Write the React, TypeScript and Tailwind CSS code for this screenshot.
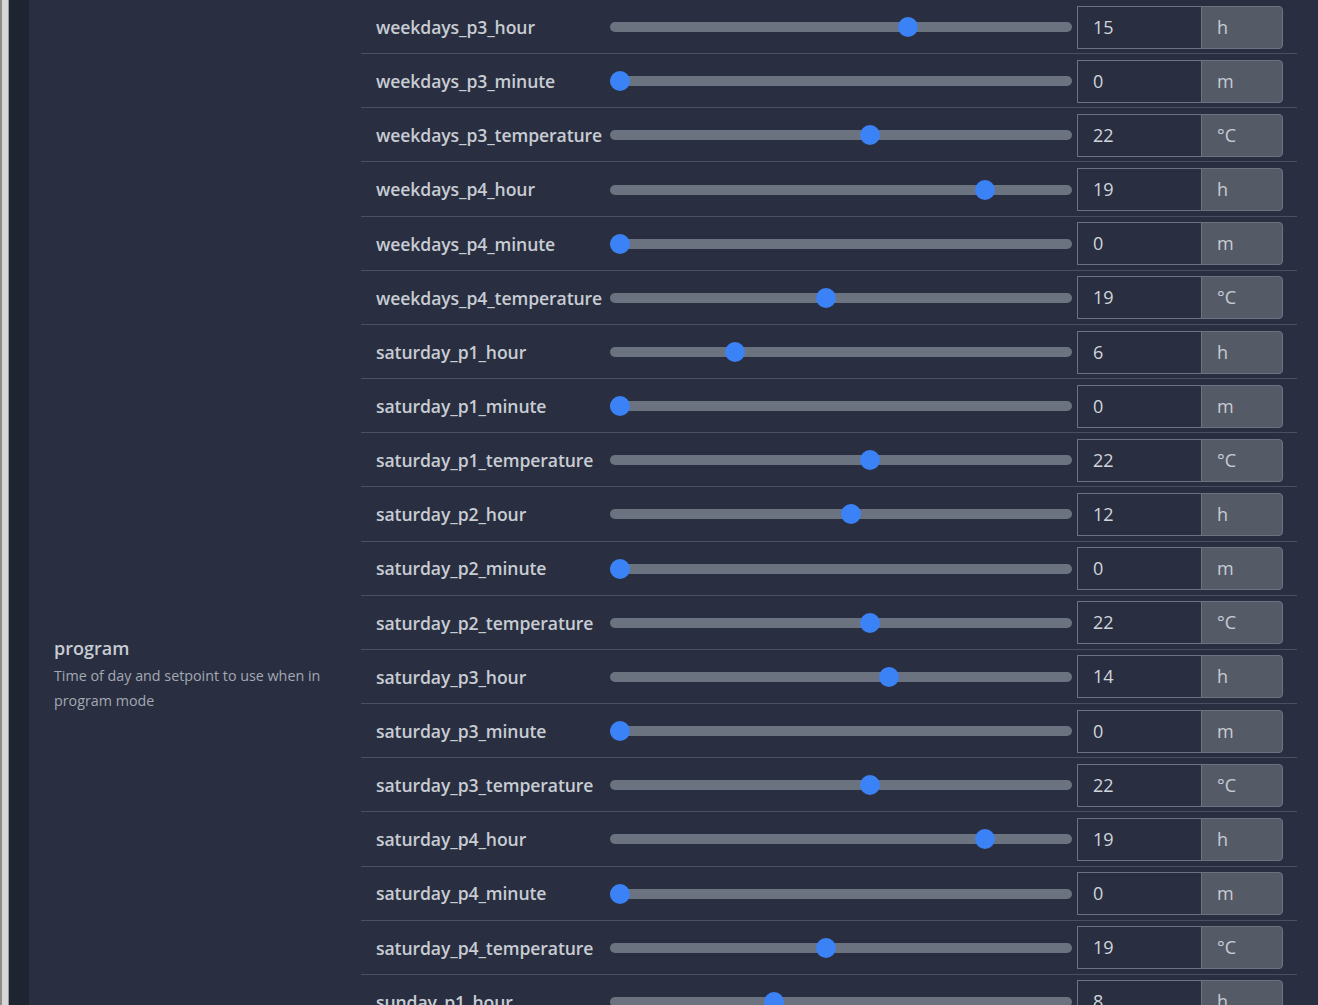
import React from "react"

type Row = { name: string; value: number; unit: string; min: number; max: number }

const units: Record<string, [string, number, number]> = {
  hour: ["h", 0, 23],
  minute: ["m", 0, 59],
  temperature: ["°C", 5, 35],
}

const raw: [string, number][] = [
  ["weekdays_p3_hour", 15],
  ["weekdays_p3_minute", 0],
  ["weekdays_p3_temperature", 22],
  ["weekdays_p4_hour", 19],
  ["weekdays_p4_minute", 0],
  ["weekdays_p4_temperature", 19],
  ["saturday_p1_hour", 6],
  ["saturday_p1_minute", 0],
  ["saturday_p1_temperature", 22],
  ["saturday_p2_hour", 12],
  ["saturday_p2_minute", 0],
  ["saturday_p2_temperature", 22],
  ["saturday_p3_hour", 14],
  ["saturday_p3_minute", 0],
  ["saturday_p3_temperature", 22],
  ["saturday_p4_hour", 19],
  ["saturday_p4_minute", 0],
  ["saturday_p4_temperature", 19],
  ["sunday_p1_hour", 8],
]

const rows: Row[] = raw.map(([name, value]) => {
  const kind = name.split("_").pop() as string
  const [unit, min, max] = units[kind]
  return { name, value, unit, min, max }
})

const Slider = ({ value, min, max }: { value: number; min: number; max: number }) => {
  const pct = (value - min) / (max - min)
  return (
    <div className="relative w-[462px] h-[10px] rounded-full bg-[#6b7280] shrink-0">
      <div
        className="absolute top-1/2 w-5 h-5 -mt-[10px] rounded-full bg-[#3b82f6]"
        style={{ left: `calc(${pct} * (100% - 20px))` }}
      />
    </div>
  )
}

const SettingRow = ({ row }: { row: Row }) => (
  <div className="flex items-center h-[54.17px] border-b border-[#4a5062] pl-[15px] pt-px shrink-0">
    <div className="w-[234px] shrink-0 text-[17.6px] font-semibold text-[#c8ccd3] tracking-[-0.1px]">{row.name}</div>
    <Slider value={row.value} min={row.min} max={row.max} />
    <div className="flex ml-[5px] h-[43px]">
      <div className="w-[125px] border border-[#6b7280] flex items-center pl-[15px] text-[18px] text-[#d1d5db]">
        {row.value}
      </div>
      <div className="w-[82px] -ml-px border border-[#6b7280] rounded-r-[4px] bg-[#555a67] flex items-center pl-[15px] text-[18px] text-[#c8ccd3]">
        {row.unit}
      </div>
    </div>
  </div>
)

export default function App() {
  return (
    <div
      className="flex w-[1318px] h-[1005px] overflow-hidden bg-[#292f41]"
      style={{ fontFamily: '"Open Sans", "Noto Sans", sans-serif' }}
    >
      <div className="w-[2px] bg-[#8c8c8c] shrink-0" />
      <div className="w-[6px] bg-[#d6d6d6] shrink-0" />
      <div className="w-px bg-[#9a9a9a] shrink-0" />
      <div className="w-[20px] bg-[#1f2431] shrink-0" />
      <div className="w-[332px] shrink-0 pl-[25px] pr-[12px] pt-[635px]">
        <div className="text-[18px] font-semibold text-[#c8ccd3]">program</div>
        <div className="text-[14.3px] leading-[25px] text-[#a3a8b2] mt-[1px]">
          Time of day and setpoint to use when in program mode
        </div>
      </div>
      <div className="w-[936px] flex flex-col shrink-0">
        {rows.map(r => (
          <SettingRow key={r.name} row={r} />
        ))}
      </div>
    </div>
  )
}
